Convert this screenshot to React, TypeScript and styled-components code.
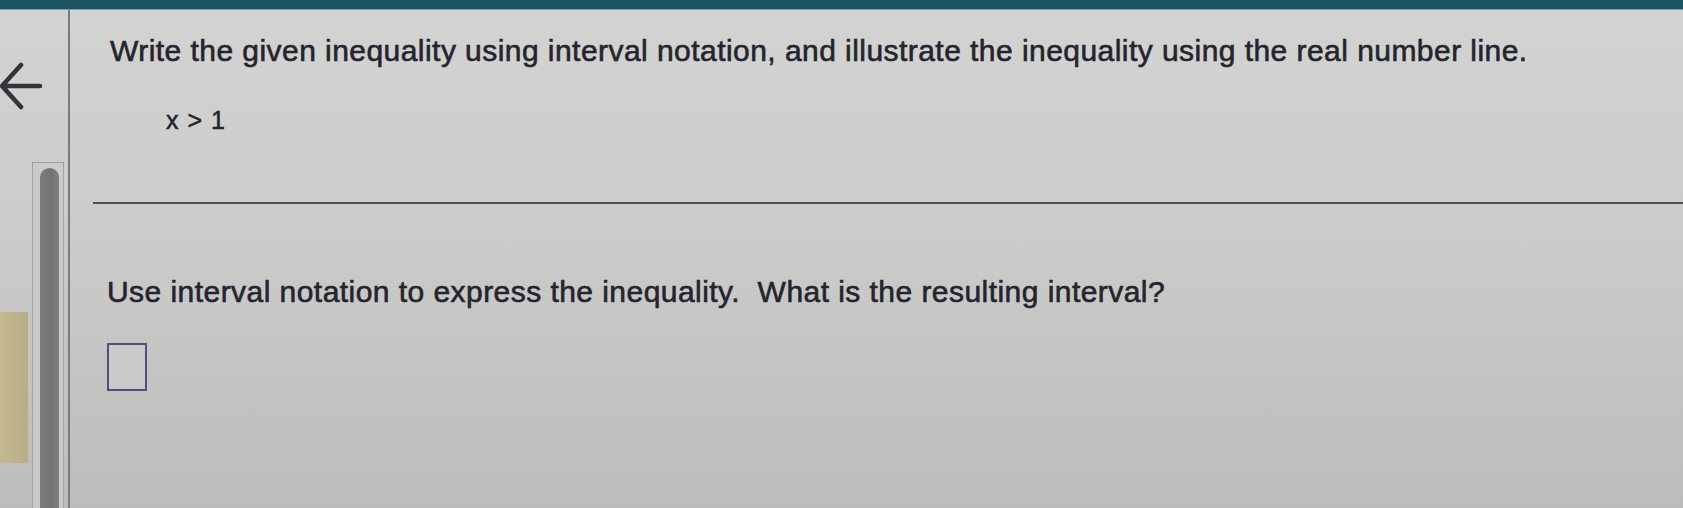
import React from "react";
import styled, { createGlobalStyle } from "styled-components";

const GlobalStyle = createGlobalStyle`
  html, body {
    margin: 0;
    padding: 0;
    width: 1683px;
    height: 508px;
    overflow: hidden;
  }
  body {
    font-family: "Liberation Sans", Arial, sans-serif;
    background: #c9c9c7;
  }
`;

export default function App() {
  return (
    <>
      <GlobalStyle />
      <Screen>
        <TopBar />
        <Main>
          <Sidebar>
            <BackButton aria-label="Back">
              <svg width="46" height="50" viewBox="0 0 46 50" fill="none">
                <path
                  d="M42 25H5M23 4L4 25l19 21"
                  stroke="#34353c"
                  strokeWidth="4.6"
                  strokeLinecap="round"
                  strokeLinejoin="round"
                />
              </svg>
            </BackButton>
            <SidebarLower>
              <Strip>
                <TanBlock />
              </Strip>
              <Track>
                <Thumb />
              </Track>
            </SidebarLower>
          </Sidebar>

          <Content>
            <Question>
              <Prompt>
                Write the given inequality using interval notation, and illustrate the
                inequality using the real number line.
              </Prompt>
              <Expression>x &gt; 1</Expression>
            </Question>

            <Divider />

            <Part>
              <Prompt>
                Use interval notation to express the inequality.&nbsp; What is the resulting
                interval?
              </Prompt>
              <AnswerBox />
            </Part>
          </Content>
        </Main>
      </Screen>
    </>
  );
}

const Screen = styled.div`
  width: 1683px;
  height: 508px;
  display: flex;
  flex-direction: column;
  background: linear-gradient(180deg, #d3d3d1 0%, #cdcdcb 40%, #bcbcbb 100%);
  color: #24242e;
`;

const TopBar = styled.div`
  height: 9px;
  flex-shrink: 0;
  background: #1c5561;
  border-bottom: 1px solid #7d9aa0;
`;

const Main = styled.div`
  flex: 1;
  display: flex;
  min-height: 0;
`;

const Sidebar = styled.div`
  width: 68px;
  flex-shrink: 0;
  border-right: 2px solid #7a7b80;
  display: flex;
  flex-direction: column;
`;

const BackButton = styled.div`
  margin-top: 51px;
  height: 50px;
  display: flex;
  align-items: center;
  margin-left: -2px;
`;

const SidebarLower = styled.div`
  flex: 1;
  margin-top: 51px;
  display: flex;
  gap: 4px;
`;

const Strip = styled.div`
  width: 28px;
  padding-top: 150px;
`;

const TanBlock = styled.div`
  height: 151px;
  background: linear-gradient(90deg, #c4b88f, #b9ad86);
`;

const Track = styled.div`
  width: 32px;
  border: 1px solid #a3a3a4;
  border-bottom: none;
  background: #cbcbca;
  padding: 5px 0 0 7px;
  box-sizing: border-box;
`;

const Thumb = styled.div`
  width: 19px;
  height: 100%;
  border-radius: 10px 10px 0 0;
  background: linear-gradient(90deg, #7a7d7e, #727576 60%, #7d8081);
`;

const Content = styled.div`
  flex: 1;
  padding: 24px 0 0 23px;
  display: flex;
  flex-direction: column;
`;

const Question = styled.div`
  padding-left: 17px;
  display: flex;
  flex-direction: column;
`;

const Prompt = styled.p`
  margin: 0;
  font-size: 30px;
  line-height: 34px;
  letter-spacing: 0.45px;
  -webkit-text-stroke: 0.6px #24242e;
  white-space: nowrap;
`;

const Expression = styled.div`
  margin: 38px 0 0 56px;
  font-size: 25px;
  line-height: 28px;
  letter-spacing: 1px;
  -webkit-text-stroke: 0.5px #24242e;
`;

const Divider = styled.hr`
  margin: 68px 0 0;
  border: none;
  height: 2px;
  background: #4f4f56;
`;

const Part = styled.div`
  padding: 71px 0 0 14px;
  display: flex;
  flex-direction: column;
  align-items: flex-start;
`;

const AnswerBox = styled.div`
  margin-top: 34px;
  width: 40px;
  height: 48px;
  box-sizing: border-box;
  border: 2px solid #4b4f7c;
  background: #cacac9;
`;
